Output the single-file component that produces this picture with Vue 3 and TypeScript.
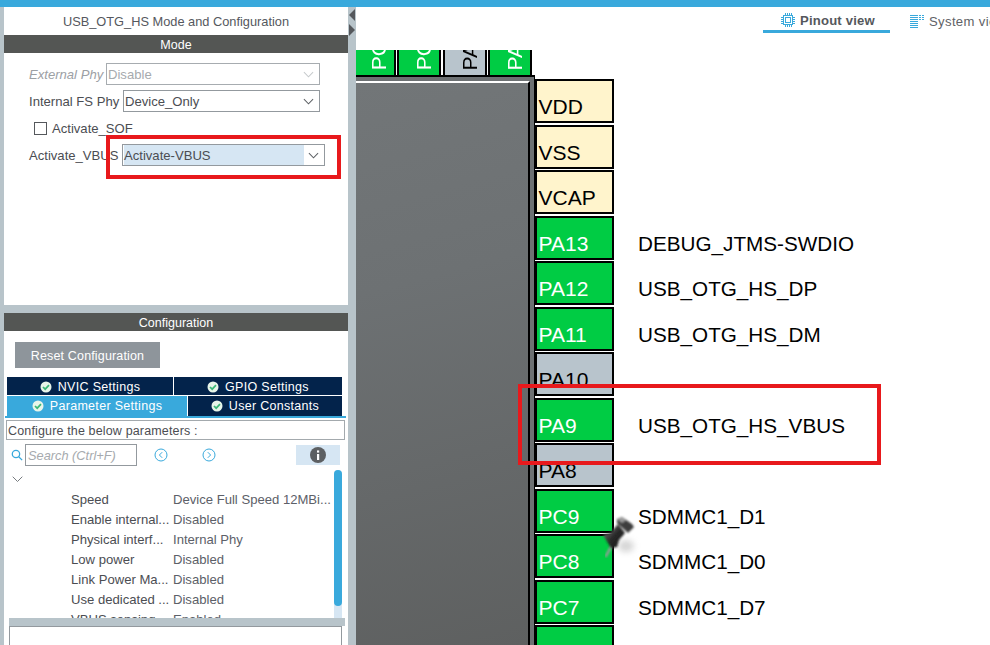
<script setup lang="ts">
interface Pin { name: string; kind: string; label: string }
const topPins: Pin[] = [
  { name: 'PC', kind: 'green', label: '' },
  { name: 'PC', kind: 'green', label: '' },
  { name: 'PA', kind: 'gray', label: '' },
  { name: 'PA', kind: 'green', label: '' },
]
const pins: Pin[] = [
  { name: 'VDD', kind: 'yellow', label: '' },
  { name: 'VSS', kind: 'yellow', label: '' },
  { name: 'VCAP', kind: 'yellow', label: '' },
  { name: 'PA13', kind: 'green', label: 'DEBUG_JTMS-SWDIO' },
  { name: 'PA12', kind: 'green', label: 'USB_OTG_HS_DP' },
  { name: 'PA11', kind: 'green', label: 'USB_OTG_HS_DM' },
  { name: 'PA10', kind: 'gray', label: '' },
  { name: 'PA9', kind: 'green', label: 'USB_OTG_HS_VBUS' },
  { name: 'PA8', kind: 'gray', label: '' },
  { name: 'PC9', kind: 'green', label: 'SDMMC1_D1' },
  { name: 'PC8', kind: 'green', label: 'SDMMC1_D0' },
  { name: 'PC7', kind: 'green', label: 'SDMMC1_D7' },
  { name: '', kind: 'green', label: '' },
]
const params: [string, string][] = [
  ['Speed', 'Device Full Speed 12MBi...'],
  ['Enable internal...', 'Disabled'],
  ['Physical interf...', 'Internal Phy'],
  ['Low power', 'Disabled'],
  ['Link Power Ma...', 'Disabled'],
  ['Use dedicated ...', 'Disabled'],
  ['VBUS sensing ...', 'Enabled'],
]
</script>

<template>
  <div class="app">
    <div class="topbar"></div>
    <div class="main">
      <aside class="panel">
        <div class="mode-section">
          <div class="title">USB_OTG_HS Mode and Configuration</div>
          <div class="bar">Mode</div>
          <div class="form">
            <div class="frow r1">
              <span class="flabel disabled w1">External Phy</span>
              <div class="select sel1 is-disabled"><span>Disable</span><svg class="chev" viewBox="0 0 12 7"><path d="M1 1l5 5 5-5" /></svg></div>
            </div>
            <div class="frow r2">
              <span class="flabel w2">Internal FS Phy</span>
              <div class="select sel2"><span>Device_Only</span><svg class="chev" viewBox="0 0 12 7"><path d="M1 1l5 5 5-5" /></svg></div>
            </div>
            <div class="frow r3">
              <span class="check"></span><span class="flabel">Activate_SOF</span>
            </div>
            <div class="frow r4">
              <span class="flabel w3">Activate_VBUS</span>
              <div class="select sel3"><span class="sel3-fill">Activate-VBUS</span><svg class="chev" viewBox="0 0 12 7"><path d="M1 1l5 5 5-5" /></svg></div>
            </div>
          </div>
        </div>
        <div class="config-section">
          <div class="bar">Configuration</div>
          <button class="reset">Reset Configuration</button>
          <div class="tabs">
            <div class="tabrow">
              <div class="tab t-nvic"><svg class="ok" viewBox="0 0 12 12"><circle cx="6" cy="6" r="5.5" /><path d="M3 6l2.2 2.2L9 4.2" /></svg>NVIC Settings</div>
              <div class="tab t-gpio"><svg class="ok" viewBox="0 0 12 12"><circle cx="6" cy="6" r="5.5" /><path d="M3 6l2.2 2.2L9 4.2" /></svg>GPIO Settings</div>
            </div>
            <div class="tabrow second">
              <div class="tab t-param"><svg class="ok" viewBox="0 0 12 12"><circle cx="6" cy="6" r="5.5" /><path d="M3 6l2.2 2.2L9 4.2" /></svg>Parameter Settings</div>
              <div class="tab t-user"><svg class="ok" viewBox="0 0 12 12"><circle cx="6" cy="6" r="5.5" /><path d="M3 6l2.2 2.2L9 4.2" /></svg>User Constants</div>
            </div>
          </div>
          <div class="tabline"></div>
          <div class="hint">Configure the below parameters :</div>
          <div class="searchrow">
            <svg class="mag" viewBox="0 0 14 14"><circle cx="5.8" cy="5.8" r="4.3" /><path d="M9 9l4 4" /></svg>
            <div class="search">Search (Ctrl+F)</div>
            <svg class="nav nav1" viewBox="0 0 14 14"><circle cx="7" cy="7" r="6" /><path d="M8.2 4.2L5.4 7l2.8 2.8" /></svg>
            <svg class="nav nav2" viewBox="0 0 14 14"><circle cx="7" cy="7" r="6" /><path d="M5.8 4.2L8.6 7l-2.8 2.8" /></svg>
            <div class="info">
              <svg viewBox="0 0 16 16"><circle cx="8" cy="8" r="8" fill="#5c5f62" /><rect x="7" y="7" width="2.2" height="6" fill="#fff" /><rect x="7" y="3.4" width="2.2" height="2.2" fill="#fff" /></svg>
            </div>
          </div>
          <div class="tablewrap">
            <div class="tablebody">
              <svg class="tree" viewBox="0 0 11 7"><path d="M.7.7l4.800 4.800L10.300.7" /></svg>
              <div v-for="p in params" :key="p[0]" class="prow">
                <span class="pk">{{ p[0] }}</span><span class="pv">{{ p[1] }}</span>
              </div>
            </div>
            <div class="track"><div class="thumb"></div></div>
          </div>
          <div class="splitter"></div>
          <div class="descbox"></div>
        </div>
      </aside>

      <div class="divider">
        <span class="arrow left"></span>
        <span class="arrow right"></span>
      </div>

      <section class="canvas">
        <div class="views">
          <div class="view active">
            <svg class="vicon" viewBox="0 0 14 14">
              <rect x="2.5" y="2.5" width="9" height="9" />
              <rect x="4.5" y="4.5" width="5" height="5" />
              <path d="M4.500 0v2M6.500 0v2M8.500 0v2M10.500 0v2M4.500 12v2M6.500 12v2M8.500 12v2M10.500 12v2M0 4.500h2M0 6.500h2M0 8.500h2M0 10.500h2M12 4.500h2M12 6.500h2M12 8.500h2M12 10.500h2" />
            </svg>
            <b>Pinout view</b>
          </div>
          <div class="view">
            <svg class="vicon" viewBox="0 0 14 14">
              <path d="M0 .5h8M0 2.500h8M0 4.500h8M0 6.500h8M0 8.500h8M0 10.500h8M0 12.500h8M9 .5h2M9 2.500h2M9 4.500h2M12 .5h2M12 2.500h2M12 4.500h2" />
            </svg>
            <span>System view</span>
          </div>
        </div>
        <div class="toppins">
          <div v-for="(p, i) in topPins" :key="i" class="tpin" :class="p.kind"><span>{{ p.name }}</span></div>
        </div>
        <div class="board">
          <div class="chip"><div class="chip-inner"></div></div>
          <div class="pinlist">
            <div v-for="(p, i) in pins" :key="i" class="pinrow">
              <div class="pin" :class="p.kind">{{ p.name }}</div>
              <div class="plabel">{{ p.label }}</div>
            </div>
          </div>
        </div>
        <div class="redbox vbus-pin"></div>
        <svg class="pushpin" viewBox="0 0 40 44">
          <defs>
            <filter id="b1"><feGaussianBlur stdDeviation="0.8" /></filter>
            <filter id="b2" x="-50%" y="-50%" width="200%" height="200%"><feGaussianBlur stdDeviation="3" /></filter>
            <linearGradient id="g1" x1="0" y1="0" x2="1" y2="1">
              <stop offset="0" stop-color="#8b8b8b" />
              <stop offset="0.5" stop-color="#2a2a2a" />
              <stop offset="1" stop-color="#111" />
            </linearGradient>
          </defs>
          <ellipse cx="24" cy="31" rx="8" ry="6" fill="#aaa" opacity="0.5" filter="url(#b2)" />
          <path d="M4 41L10 30" stroke="#9a9a9a" stroke-width="2.500" stroke-linecap="round" filter="url(#b1)" />
          <g filter="url(#b1)">
            <path d="M1 20l7-2 8-9 7 9-6 7-2 7-6 1z" fill="url(#g1)" />
            <path d="M15 4l5-2 10 7 2 3-6 6-11-10z" fill="#3c3c3c" />
            <path d="M15 4l5-2 4 3-4 3z" fill="#9c9c9c" />
          </g>
        </svg>
      </section>

      <div class="redbox vbus-select"></div>
    </div>
  </div>
</template>

<style>
html, body { margin: 0; overflow: hidden; background: #fff; }
</style>

<style scoped>
.app { width: 990px; height: 645px; overflow: hidden; font-family: "Liberation Sans", Arial, sans-serif; color: #4b4d52; font-size: 13.1px; }
.topbar { height: 7px; background: #39a9dc; }
.main { position: relative; display: flex; height: 638px; }

.panel { width: 344px; height: 638px; border-left: 4px solid #b8c4ca; display: flex; flex-direction: column; background: #b8c4ca; flex: none; }
.mode-section { height: 298px; background: #fff; flex: none; }
.title { height: 28px; line-height: 29px; text-align: center; color: #55585e; font-size: 12.8px; }
.bar { height: 18px; line-height: 20px; background: #545654; color: #fff; text-align: center; font-size: 12.5px; }
.frow { display: flex; align-items: center; height: 22px; padding-left: 25px; }
.r1 { margin-top: 10px; }
.r2 { margin-top: 5px; }
.r3 { margin-top: 5px; padding-left: 30px; }
.r4 { margin-top: 5px; }
.flabel { white-space: nowrap; color: #4b4d52; }
.flabel.disabled { font-style: italic; color: #9ca0a4; }
.w1 { width: 77px; } .w2 { width: 94px; } .w3 { width: 93px; }
.check { width: 11px; height: 11px; border: 1px solid #55585c; margin-right: 5px; flex: none; }
.select { position: relative; height: 22px; box-sizing: border-box; border: 1px solid #93999e; display: flex; align-items: center; padding-left: 1px; color: #4b4d52; flex: none; }
.sel1 { width: 214px; }
.sel2 { width: 197px; }
.sel3 { width: 203px; }
.sel3-fill { display: flex; align-items: center; width: 180px; height: 20px; background: #d6e6f3; }
.is-disabled { color: #a6aaae; border-color: #a7acb0; }
.chev { position: absolute; right: 5px; top: 7px; width: 11px; height: 7px; fill: none; stroke: #5c6064; stroke-width: 1.1; }
.is-disabled .chev { stroke: #c6cacc; }

.config-section { margin-top: 8px; flex: 1; background: #fff; display: flex; flex-direction: column; min-height: 0; overflow: hidden; }
.reset { width: 145px; height: 26px; margin: 11px 0 9px 11px; border: none; background: #8e959b; color: #fff; font: inherit; font-size: 12.5px; letter-spacing: 0.15px; padding: 1px 0 0; }
.tabs { margin-left: 3px; width: 335px; color: #fff; letter-spacing: 0.3px; font-size: 12.5px; }
.tabrow { display: flex; gap: 1px; height: 18px; }
.tabrow.second { margin-top: 1px; height: 20px; }
.tab { display: flex; align-items: center; justify-content: center; background: #03234b; gap: 6px; padding-top: 1px; box-sizing: border-box; }
.second .tab { padding: 0 0 1px; }
.t-nvic { width: 166px; } .t-gpio { width: 168px; }
.t-param { width: 180px; background: #39a9dc; } .t-user { width: 154px; }
.ok { width: 12px; height: 12px; flex: none; }
.ok circle { fill: #e8f5ea; }
.ok path { fill: none; stroke: #3cb878; stroke-width: 1.7; }
.tabline { height: 2px; width: 341px; margin-left: 1px; background: #39a9dc; }
.hint { box-sizing: border-box; width: 339px; height: 20px; line-height: 20px; margin: 2px 0 0 2px; border: 1px solid #a3a9ad; color: #4b4d52; padding-left: 1px; letter-spacing: 0.15px; font-size: 12.5px; }
.searchrow { display: flex; align-items: center; height: 22px; margin-top: 4px; }
.mag { width: 12px; height: 12px; margin-left: 7px; fill: none; stroke: #39a9dc; stroke-width: 1.5; flex: none; }
.search { box-sizing: border-box; width: 112px; height: 22px; margin-left: 2px; border: 1px solid #93999e; color: #a6aaae; font-style: italic; line-height: 21px; padding-left: 2px; flex: none; font-size: 12.8px; }
.nav { width: 14px; height: 14px; fill: none; stroke: #39a9dc; stroke-width: 1; flex: none; }
.nav1 { margin-left: 17px; }
.nav2 { margin-left: 34px; }
.info { width: 44px; height: 20px; margin-left: 80px; background: #d6e6f3; display: flex; align-items: center; justify-content: center; flex: none; }
.info svg { width: 16px; height: 16px; }
.tablewrap { position: relative; height: 148px; overflow: hidden; flex: none; margin-top: 4px; display: flex; }
.tablebody { width: 330px; padding-top: 19px; position: relative; }
.tree { position: absolute; left: 8px; top: 6px; width: 11px; height: 7px; fill: none; stroke: #777b7f; stroke-width: 1; }
.prow { display: flex; height: 20px; line-height: 21px; white-space: nowrap; }
.pk { width: 102px; margin-left: 67px; flex: none; color: #4b4d52; }
.pv { color: #5c6068; }
.track { width: 8px; height: 148px; background: #d6e6f3; border-radius: 4px 4px 0 0; }
.thumb { width: 8px; height: 136px; background: #39a9dc; border-radius: 4px; }
.splitter { height: 8px; width: 336px; margin-left: 5px; background: #b8c4ca; flex: none; }
.descbox { width: 331px; margin-left: 5px; flex: 1; border: 1px solid #93999e; border-bottom: none; }

.divider { width: 8px; height: 638px; background: #b8c4ca; flex: none; display: flex; flex-direction: column; padding-top: 2px; box-sizing: border-box; gap: 3px; }
.arrow { display: block; width: 0; height: 0; border-style: solid; margin-left: 1px; }
.arrow.left { border-width: 6px 6px 6px 0; border-color: transparent #55585c transparent transparent; }
.arrow.right { border-width: 6px 0 6px 6px; border-color: transparent transparent transparent #55585c; }

.canvas { position: relative; flex: 1; min-width: 0; overflow: hidden; background: #fff; }
.views { display: flex; height: 43px; padding-left: 407px; box-sizing: border-box; width: 700px; }
.view { display: flex; align-items: center; height: 24px; box-sizing: border-box; padding: 5px 0 0; color: #5f6266; letter-spacing: 0.35px; white-space: nowrap; }
.view.active { width: 127px; height: 26px; padding: 3px 0 0 18px; border-bottom: 3px solid #39a9dc; color: #55585c; margin-right: 20px; }
.view.active b { letter-spacing: 0.2px; }
.vicon { width: 14px; height: 14px; margin-right: 5px; fill: none; stroke: #39a9dc; stroke-width: 1; flex: none; }

.toppins { display: flex; gap: 1.5px; height: 25px; margin-left: -4.5px; }
.tpin { box-sizing: border-box; width: 44px; height: 25px; border: 2px solid #000; border-top: none; border-bottom: none; position: relative; overflow: hidden; font-size: 21px; }
.tpin span { position: absolute; left: 12px; bottom: 5px; line-height: 26px; writing-mode: vertical-rl; transform: rotate(180deg); white-space: nowrap; }
.green { background: #00cc44; color: #fff; }
.gray { background: #b8c4cc; color: #000; }
.yellow { background: #fff4cc; color: #000; }

.board { display: flex; align-items: flex-start; }
.chip { box-sizing: border-box; width: 179px; height: 570px; flex: none; background: #6d7173; border-top: 2px solid #000; border-right: 1px solid #000; padding: 4px 4px 0 0; }
.chip-inner { box-sizing: border-box; height: 100%; border-top: 2px solid #fff; border-right: 2px solid #000; background: linear-gradient(165deg, #727678 0%, #6d7173 35%, #5e6060 100%); }
.pinlist { display: flex; flex-direction: column; gap: 1.5px; margin-top: 4px; }
.pinrow { display: flex; align-items: center; height: 44px; font-size: 20.7px; }
.pin { box-sizing: border-box; width: 79px; height: 44px; border: 2px solid #000; padding: 14px 0 0 1.5px; line-height: 24px; white-space: nowrap; overflow: hidden; font-size: 21px; }
.plabel { margin-left: 24px; padding-top: 12px; line-height: 24px; color: #000; white-space: nowrap; }

.redbox { position: absolute; box-sizing: border-box; border: 4px solid #e8191c; pointer-events: none; }
.vbus-select { left: 106px; top: 128px; width: 235px; height: 44px; }
.vbus-pin { left: 162px; top: 377px; width: 363px; height: 81px; }
.pushpin { position: absolute; left: 246px; top: 508px; width: 40px; height: 44px; }
</style>
